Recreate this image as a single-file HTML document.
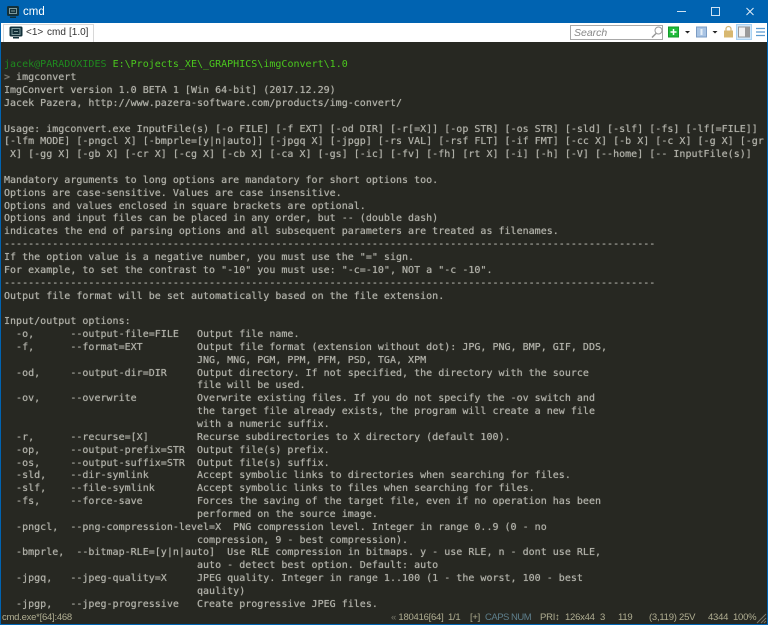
<!DOCTYPE html>
<html>
<head>
<meta charset="utf-8">
<style>
html,body{margin:0;padding:0;background:#0063b1;}
body{width:768px;height:625px;position:relative;overflow:hidden;font-family:"Liberation Sans",sans-serif;}
.abs{position:absolute;}
#tabbar{left:1px;top:23px;width:766px;height:19px;background:#fff;}
#term{left:1px;top:42px;width:766px;height:568px;background:#272822;}
#status{left:1px;top:610px;width:766px;height:14px;background:#272822;color:#b0ae92;font-size:9.5px;line-height:15px;letter-spacing:-0.25px;}
pre{position:absolute;left:3px;top:4.5px;margin:0;font-family:"DejaVu Sans Mono",monospace;font-size:10px;line-height:12.84px;letter-spacing:0.01px;color:#b0b0a8;text-shadow:0 0 0.6px #b0b0a8;}
.g{color:#1f8a1f;text-shadow:none}.b{color:#4bc81e;text-shadow:none}
.s{position:absolute;top:0;white-space:nowrap;}
.t{position:absolute;top:3px;color:#333;font-size:10px;line-height:14px;white-space:nowrap;}
</style>
</head>
<body>
<svg class="abs" style="left:6px;top:5px" width="14" height="14" viewBox="0 0 14 14"><rect x="1" y="1" width="12" height="10" rx="1.500" fill="#12303a"/><rect x="3.500" y="3.500" width="7" height="5" fill="none" stroke="#7f9a9c"/><path d="M5 6h4" stroke="#7f9a9c"/><rect x="4" y="11.500" width="6" height="1.500" fill="#12303a"/></svg>
<div class="abs" style="left:23px;top:4px;color:#fff;font-size:11.5px;line-height:16px;">cmd</div>
<svg class="abs" style="left:670px;top:0" width="98" height="23" viewBox="0 0 98 23"><path d="M7 11.500h9" stroke="#cfe2f2" stroke-width="1"/><rect x="41.500" y="7.500" width="8" height="8" fill="none" stroke="#cfe2f2"/><path d="M76.500 8l7 7M83.500 8l-7 7" stroke="#e2edf6" stroke-width="1"/></svg>

<div class="abs" id="tabbar">
  <div class="abs" style="left:2px;top:1px;width:91px;height:18px;background:#fff;border:1px solid #d8d8d8;border-bottom:none;box-sizing:border-box;"></div>
  <svg class="abs" style="left:8px;top:3px" width="14" height="14" viewBox="0 0 14 14"><rect x="0.500" y="0.500" width="13" height="10" rx="1.500" fill="#12303a"/><rect x="3" y="2.500" width="8" height="6" fill="none" stroke="#7f9a9c"/><path d="M5 5.500h4" stroke="#7f9a9c"/><rect x="4" y="11" width="6" height="1.500" fill="#12303a"/></svg>
  <span class="t" style="left:25px">&lt;1&gt;</span>
  <span class="t" style="left:46px">cmd</span>
  <span class="t" style="left:68px">[1.0]</span>
  <div class="abs" style="left:569px;top:2px;width:91px;height:13px;border:1px solid #a8a8a8;background:#fff;font-style:italic;color:#888;font-size:10.500px;line-height:15px;text-indent:3px;">Search</div>
  <svg class="abs" style="left:650px;top:3px" width="12" height="13" viewBox="0 0 12 13"><circle cx="7.500" cy="4.500" r="3.500" fill="none" stroke="#999"/><path d="M5 7.500L1 11.500" stroke="#999" stroke-width="1.500"/></svg>
  <svg class="abs" style="left:667px;top:1px" width="98" height="17" viewBox="0 0 98 17">
    <rect x="0.500" y="3" width="10" height="10" fill="#1fbb3a" stroke="#159a2b"/><path d="M5.500 5v6M2.500 8h6" stroke="#fff" stroke-width="1.500"/>
    <path d="M17 7h5l-2.500 2.500z" fill="#222"/>
    <rect x="28.500" y="3" width="10" height="10" fill="#a9c4e4" stroke="#7b9cc4"/><path d="M33.500 5v6" stroke="#e6eff8" stroke-width="2"/>
    <path d="M44.500 7h5l-2.500 2.500z" fill="#222"/>
    <rect x="56" y="6.500" width="9" height="7" fill="#d8b870"/><path d="M58 6.500V5a2.500 2.500 0 0 1 5 0v1.500" fill="none" stroke="#d2b578" stroke-width="1.200"/>
    <rect x="68.500" y="0.500" width="15" height="15" fill="#cfe6fa" stroke="#a9d2f2"/><rect x="70.500" y="3" width="11" height="10" fill="#f2f2f2" stroke="#999"/><rect x="77" y="3.500" width="4" height="9" fill="#9a9a9a"/>
    <path d="M88 4.500h9M88 8h9M88 11.500h9" stroke="#5b9bd0" stroke-width="1.300"/>
  </svg>
</div>

<div class="abs" id="term">
<pre>

<span class="g">jacek@PARADOXIDES</span> <span class="b">E:\Projects_XE\_GRAPHICS\imgConvert\1.0</span>
<span style="color:#6f6f68">&gt;</span> imgconvert
ImgConvert version 1.0 BETA 1 [Win 64-bit] (2017.12.29)
Jacek Pazera, http://www.pazera-software.com/products/img-convert/

Usage: imgconvert.exe InputFile(s) [-o FILE] [-f EXT] [-od DIR] [-r[=X]] [-op STR] [-os STR] [-sld] [-slf] [-fs] [-lf[=FILE]]
[-lfm MODE] [-pngcl X] [-bmprle=[y|n|auto]] [-jpgq X] [-jpgp] [-rs VAL] [-rsf FLT] [-if FMT] [-cc X] [-b X] [-c X] [-g X] [-gr
 X] [-gg X] [-gb X] [-cr X] [-cg X] [-cb X] [-ca X] [-gs] [-ic] [-fv] [-fh] [rt X] [-i] [-h] [-V] [--home] [-- InputFile(s)]

Mandatory arguments to long options are mandatory for short options too.
Options are case-sensitive. Values are case insensitive.
Options and values enclosed in square brackets are optional.
Options and input files can be placed in any order, but -- (double dash)
indicates the end of parsing options and all subsequent parameters are treated as filenames.
------------------------------------------------------------------------------------------------------------
If the option value is a negative number, you must use the "=" sign.
For example, to set the contrast to "-10" you must use: "-c=-10", NOT a "-c -10".
------------------------------------------------------------------------------------------------------------
Output file format will be set automatically based on the file extension.

Input/output options:
  -o,      --output-file=FILE   Output file name.
  -f,      --format=EXT         Output file format (extension without dot): JPG, PNG, BMP, GIF, DDS,
                                JNG, MNG, PGM, PPM, PFM, PSD, TGA, XPM
  -od,     --output-dir=DIR     Output directory. If not specified, the directory with the source
                                file will be used.
  -ov,     --overwrite          Overwrite existing files. If you do not specify the -ov switch and
                                the target file already exists, the program will create a new file
                                with a numeric suffix.
  -r,      --recurse=[X]        Recurse subdirectories to X directory (default 100).
  -op,     --output-prefix=STR  Output file(s) prefix.
  -os,     --output-suffix=STR  Output file(s) suffix.
  -sld,    --dir-symlink        Accept symbolic links to directories when searching for files.
  -slf,    --file-symlink       Accept symbolic links to files when searching for files.
  -fs,     --force-save         Forces the saving of the target file, even if no operation has been
                                performed on the source image.
  -pngcl,  --png-compression-level=X  PNG compression level. Integer in range 0..9 (0 - no
                                compression, 9 - best compression).
  -bmprle,  --bitmap-RLE=[y|n|auto]  Use RLE compression in bitmaps. y - use RLE, n - dont use RLE,
                                auto - detect best option. Default: auto
  -jpgq,   --jpeg-quality=X     JPEG quality. Integer in range 1..100 (1 - the worst, 100 - best
                                qaulity)
  -jpgp,   --jpeg-progressive   Create progressive JPEG files.</pre>
</div>

<div class="abs" id="status">
  <span class="s" style="left:1px">cmd.exe*[64]:468</span>
  <span class="s" style="left:390px"><span style="color:#77776a">«</span> 180416[64]</span>
  <span class="s" style="left:447px">1/1</span>
  <span class="s" style="left:469px">[+]</span>
  <span class="s" style="left:484px;color:#5e7f8c;letter-spacing:-0.5px">CAPS</span>
  <span class="s" style="left:510px;color:#5e7f8c;letter-spacing:-0.5px">NUM</span>
  <span class="s" style="left:539px">PRI↕</span>
  <span class="s" style="left:564px">126x44</span>
  <span class="s" style="left:599px">3</span>
  <span class="s" style="left:617px">119</span>
  <span class="s" style="left:648px">(3,119) 25V</span>
  <span class="s" style="left:707px">4344</span>
  <span class="s" style="left:732px">100%</span>
  <svg class="abs" style="left:753px;top:1px" width="13" height="13" viewBox="0 0 13 13"><path d="M12 3L3 12M12 7L7 12M12 10L10 12" stroke="#77776a" stroke-width="1"/></svg>
</div>
</body>
</html>
